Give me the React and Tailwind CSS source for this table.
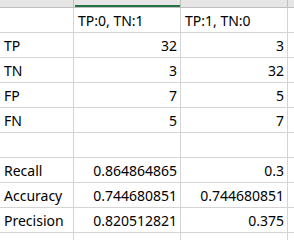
const rows = [
  ["", "TP:0, TN:1", "TP:1, TN:0", "left"],
  ["TP", "32", "3"],
  ["TN", "3", "32"],
  ["FP", "7", "5"],
  ["FN", "5", "7"],
  ["", "", ""],
  ["Recall", "0.864864865", "0.3"],
  ["Accuracy", "0.744680851", "0.744680851"],
  ["Precision", "0.820512821", "0.375"],
  ["", "", ""],
];

function Cell({ children, align = "left", w }) {
  return (
    <div
      className={`h-[25px] shrink-0 border-r border-b border-[#d4d4d4] flex items-end pb-[4px] overflow-hidden whitespace-nowrap ${
        align === "right" ? "justify-end pr-[3px]" : "justify-start pl-[4px]"
      } ${w}`}
    >
      {children}
    </div>
  );
}

export default function App() {
  return (
    <div
      className="w-[294px] h-[240px] overflow-hidden bg-white text-black text-[14px] leading-none"
      style={{ fontFamily: '"Noto Sans", sans-serif' }}
    >
      {/* column headers */}
      <div className="flex h-[8px] bg-[#e6e6e6] border-b border-[#bfbfbf]">
        <div className="w-[74px] shrink-0 border-r border-[#bfbfbf]" />
        <div className="w-[107px] shrink-0 border-r border-[#bfbfbf] flex flex-col justify-end">
          <div className="h-[2px] bg-[#217346] ml-[1px]" />
        </div>
        <div className="w-[107px] shrink-0 border-r border-[#bfbfbf]" />
        <div className="flex-1" />
      </div>

      {rows.map((r, i) => (
        <div key={i} className="flex">
          <Cell w="w-[74px]">{r[0]}</Cell>
          <Cell w="w-[107px]" align={r[3] || "right"}>{r[1]}</Cell>
          <Cell w="w-[107px]" align={r[3] || "right"}>{r[2]}</Cell>
          <div className="flex-1 h-[25px] border-b border-[#d4d4d4]" />
        </div>
      ))}
    </div>
  );
}
